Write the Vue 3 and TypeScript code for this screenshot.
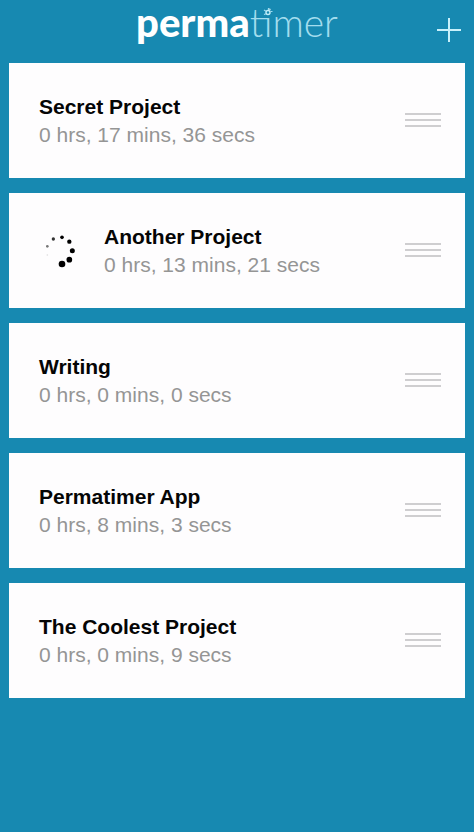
<script setup lang="ts">
interface Project {
  name: string
  hours: number
  minutes: number
  seconds: number
  running?: boolean
}

const projects: Project[] = [
  { name: 'Secret Project', hours: 0, minutes: 17, seconds: 36 },
  { name: 'Another Project', hours: 0, minutes: 13, seconds: 21, running: true },
  { name: 'Writing', hours: 0, minutes: 0, seconds: 0 },
  { name: 'Permatimer App', hours: 0, minutes: 8, seconds: 3 },
  { name: 'The Coolest Project', hours: 0, minutes: 0, seconds: 9 },
]

const elapsed = (p: Project): string =>
  `${p.hours} hrs, ${p.minutes} mins, ${p.seconds} secs`
</script>

<template>
  <div class="screen">
    <header class="bar">
      <h1 class="logo">
        <span class="logo-bold">perma</span><span class="logo-light">timer</span>
        <svg class="spark" viewBox="0 0 14 14" aria-hidden="true">
          <circle cx="6" cy="6" r="3.5" fill="#1789b1" />
          <circle cx="8" cy="7.5" r="2" fill="none" stroke="#c3edf8" stroke-width="1.4" />
          <path d="M8.5 3v2M12.5 6.5h-2M4 5l2 1.2M4 9.5l2-.8M10.5 4l-1 1.2" stroke="#9edcef" stroke-width="1.2" fill="none" />
        </svg>
      </h1>
      <button class="add" type="button" aria-label="Add project">
        <svg viewBox="0 0 24 24" aria-hidden="true">
          <path d="M12 0v24M0 12h24" stroke="#c9f1fb" stroke-width="2" fill="none" />
        </svg>
      </button>
    </header>

    <main>
      <ul class="projects">
        <li v-for="project in projects" :key="project.name" class="card">
          <svg v-if="project.running" class="spinner" viewBox="-3 6 108 108" aria-hidden="true">
            <circle cx="66" cy="19" r="5.5" />
            <circle cx="88" cy="32" r="6.5" />
            <circle cx="97" cy="59" r="7.5" />
            <circle cx="88" cy="86" r="8.5" />
            <circle cx="66" cy="99" r="10" />
            <circle cx="40" cy="24" r="5" fill="#333" />
            <circle cx="22" cy="46" r="4" fill="#777" />
            <circle cx="22" cy="72" r="2.5" fill="#ddd" />
          </svg>
          <div class="details">
            <h2 class="name">{{ project.name }}</h2>
            <p class="time">{{ elapsed(project) }}</p>
          </div>
          <button class="handle" type="button" :aria-label="`Reorder ${project.name}`">
            <span></span><span></span><span></span>
          </button>
        </li>
      </ul>
    </main>
  </div>
</template>

<style>
body {
  background: #1789b1;
}
</style>

<style scoped>
.screen {
  min-height: 100vh;
  background: #1789b1;
  font-family: "Liberation Sans", Arial, sans-serif;
}

.bar {
  display: grid;
  grid-template-columns: 1fr auto 1fr;
  height: 63px;
}

.logo {
  position: relative;
  grid-column: 2;
  margin: 0;
  font-family: Lato, sans-serif;
  font-size: 39px;
  line-height: 45px;
  white-space: nowrap;
}

.logo-bold {
  font-size: 40px;
  font-weight: 900;
  color: #fff;
}

.logo-light {
  font-weight: 300;
  color: #a3ddee;
}

.spark {
  position: absolute;
  top: 5px;
  left: 124px;
  width: 14px;
  height: 14px;
}

.add {
  justify-self: end;
  align-self: start;
  width: 24px;
  height: 24px;
  margin: 18px 13px 0 0;
  padding: 0;
  border: 0;
  background: none;
  cursor: pointer;
}

.add svg {
  display: block;
}

.projects {
  display: flex;
  flex-direction: column;
  gap: 15px;
  margin: 0;
  padding: 0 9px 15px;
  list-style: none;
}

.card {
  display: flex;
  align-items: center;
  min-height: 115px;
  box-sizing: border-box;
  padding: 0 24px 0 30px;
  background: #fefdfe;
}

.spinner {
  width: 36px;
  height: 36px;
  margin-right: 29px;
}

.details {
  flex: 1;
}

.name,
.time {
  margin: 0;
  font-size: 21px;
  line-height: 28px;
}

.name {
  font-weight: 700;
  color: #050505;
}

.time {
  color: #959595;
}

.handle {
  display: flex;
  flex-direction: column;
  gap: 4px;
  width: 36px;
  padding: 0 0 2px;
  border: 0;
  background: none;
  cursor: grab;
}

.handle span {
  height: 2px;
  background: #cfced0;
}
</style>
